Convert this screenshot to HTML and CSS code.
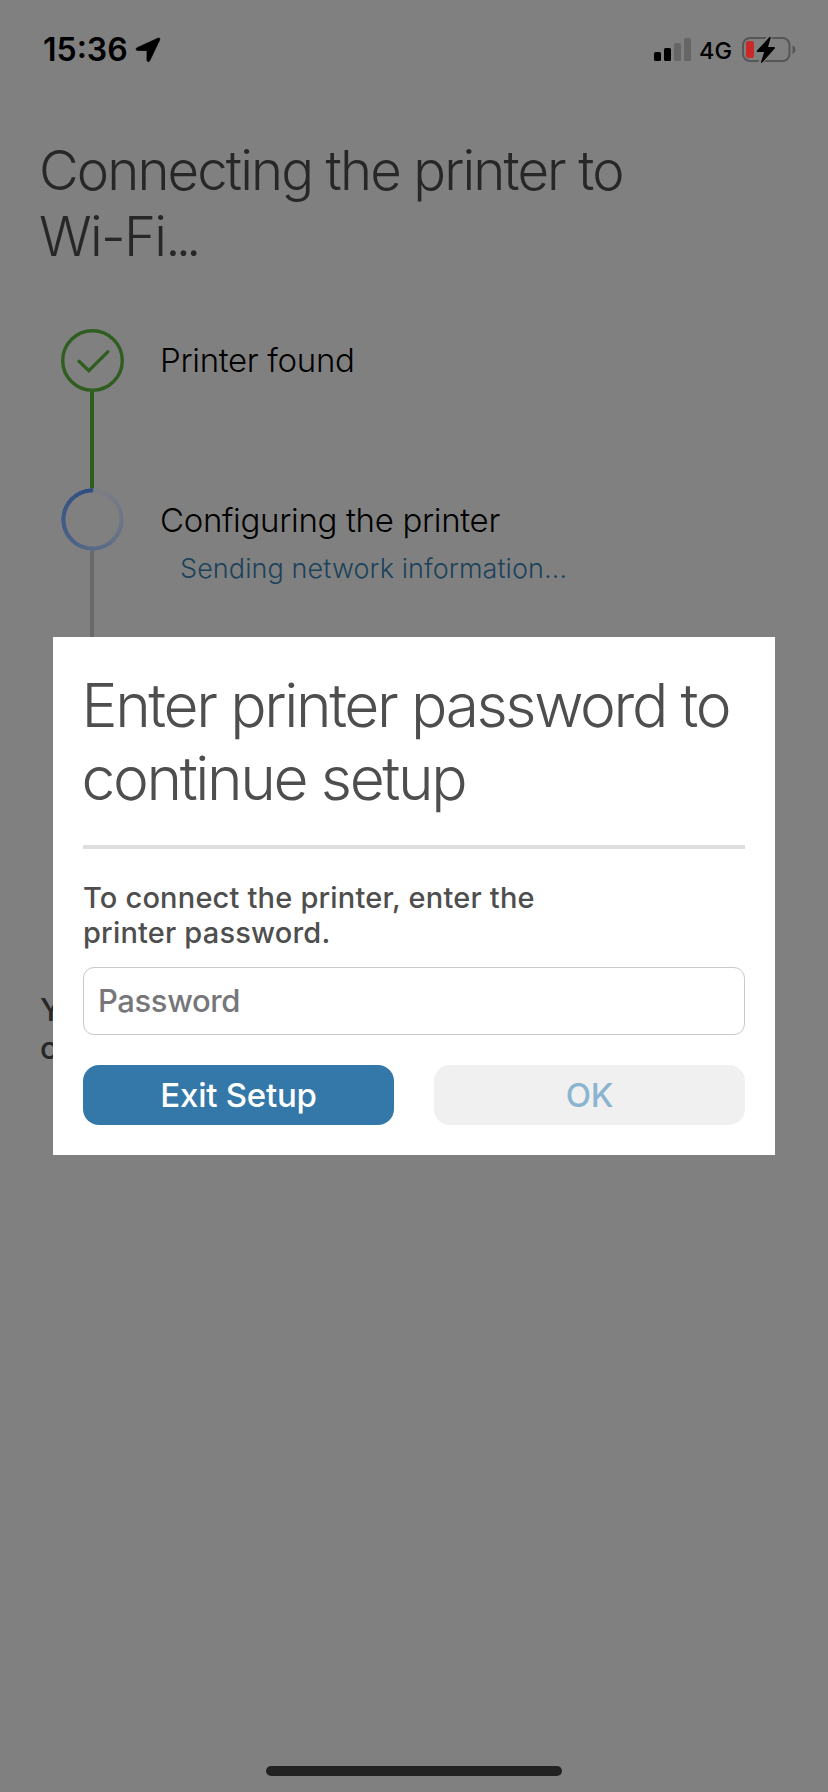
FILE: index.html
```html
<!DOCTYPE html>
<html lang="en">
<head>
<meta charset="utf-8">
<title>Printer setup</title>
<link rel="stylesheet" href="styles.css">
</head>
<body>
<div class="screen">
  <header class="status">
    <span class="time">15:36</span>
    <svg class="location" width="26" height="26" viewBox="0 0 26 26"><path d="M23 1.2 2.2 10.7C.5 11.5.8 13.4 2.7 13.4H12V23c0 2 2 2.300 2.800.5L24.600 3C25.200 1.500 24.400.6 23 1.200Z" stroke="#000" stroke-width=".8"/></svg>
    <svg class="signal" width="38" height="24" viewBox="0 0 38 24"><rect y="14" width="7" height="9" rx="1.500"/><rect x="10" y="10" width="7" height="13" rx="1.500"/><g fill="#666"><rect x="20" y="5" width="7" height="18" rx="1.500"/><rect x="30" width="7" height="23" rx="1.500"/></g></svg>
    <span class="network">4G</span>
    <svg class="battery" width="54" height="28" viewBox="0 0 54 28"><rect x="1" y="2" width="46.500" height="23" rx="7" fill="none" stroke="#565656" stroke-width="2"/><path d="M50.500 9.500c4 1.500 4 7 0 8.500Z" fill="#565656"/><rect x="4" y="5" width="8" height="17" rx="2.500" fill="#c92a27"/><path d="M28 .5 14.500 14.800c-.7.8-.3 1.700.7 1.700h5.600L18.500 26.500 33 12.500c.7-.8.3-1.700-.7-1.700h-6.600Z" stroke="#808080" stroke-width="4" stroke-linejoin="round"/><path d="M27.500 1 15 14.600c-.7.8-.3 1.500.7 1.500h6.500L19 25.800c-.3 1 .6 1.400 1.300.6L32.700 12.600c.6-.8.3-1.600-.7-1.600h-6L28.700 1.800c.3-1-.5-1.500-1.200-.8Z"/></svg>
  </header>

  <main class="page">
    <h1 class="title">Connecting the printer to<br><span class="title-end">Wi-Fi<span class="dots">...</span></span></h1>
    <ol class="steps">
      <li class="step">
        <div class="track">
          <svg width="63" height="63" viewBox="0 0 63 63" fill="none" stroke="#2f5e20" stroke-width="3.400"><circle cx="31.500" cy="31.500" r="29.800"/><path d="m18 32.200 9.800 9.500 19-18.800" stroke-linecap="round"/></svg>
          <span class="line line-done"></span>
        </div>
        <div class="label"><p class="name">Printer found</p></div>
      </li>
      <li class="step">
        <div class="track">
          <span class="spinner"></span>
          <span class="line"></span>
        </div>
        <div class="label"><p class="name config">Configuring the printer</p><p class="detail">Sending network information...</p></div>
      </li>
    </ol>
    <p class="note">Y<br>c</p>
  </main>
  <span class="home"></span>

  <section class="dialog">
    <h2 class="heading">Enter printer password to<br>continue setup</h2>
    <hr class="divider">
    <p class="message">To connect the printer, enter the<br>printer password.</p>
    <div class="field">Password</div>
    <div class="actions">
      <button class="button primary">Exit Setup</button>
      <button class="button disabled">OK</button>
    </div>
  </section>
</div>
</body>
</html>
```
FILE: styles.css
```css
* { box-sizing: border-box; margin: 0; padding: 0; }
body { font-family: Inter, "Liberation Sans", sans-serif; background: #808080; color: #000; }
.screen { position: relative; width: 828px; height: 1792px; overflow: hidden; background: #808080; display: flex; flex-direction: column; }
.status { height: 137px; padding: 31px 32px 0 43px; display: flex; align-items: flex-start; }
.status svg { flex: none; }
.time { width: 92px; font-size: 32px; line-height: 38px; font-weight: 600; white-space: nowrap; }
.location { margin-top: 6px; }
.signal { margin: 7px 0 0 auto; }
.network { width: 50px; padding-left: 7px; font-size: 23.500px; line-height: 28px; font-weight: 500; margin-top: 6px; white-space: nowrap; }
.battery { margin-top: 5px; }
.page { flex: 1; padding: 0 40px; }
.title { margin-left: -1px; font-size: 54.500px; line-height: 66px; font-weight: 300; color: #272727; white-space: nowrap; letter-spacing: -1.890px; }
.title-end { letter-spacing: -1.700px; }
.dots { letter-spacing: -5px; }
.steps { list-style: none; margin: 60px 0 0 20.500px; }
.step { display: flex; gap: 36.500px; height: 159px; }
.track { width: 63px; display: flex; flex-direction: column; align-items: center; flex: none; }
.track svg { display: block; }
.line { width: 4px; flex: 1; background: #696969; }
.line-done { background: #2f5e20; }
.spinner { width: 63px; height: 63px; border-radius: 50%; background: conic-gradient(from 3deg, #7c7e83, #6d7686 25%, #566987 50%, #3f5a86 75%, #2d4c80 99%, #7c7e83); -webkit-mask: radial-gradient(circle, transparent 26.500px, #000 27.500px, #000 31px, transparent 31.500px); mask: radial-gradient(circle, transparent 26.500px, #000 27.500px, #000 31px, transparent 31.500px); }
.label { padding-top: 11px; white-space: nowrap; }
.name { font-size: 33px; line-height: 40px; font-weight: 300; letter-spacing: -.320px; }
.config { margin-top: 1px; }
.detail { margin: 13px 0 0 20px; font-size: 27px; line-height: 32px; font-weight: 300; letter-spacing: .080px; color: #1c425b; }
.note { margin-top: 344px; font-size: 31px; line-height: 38px; font-weight: 500; color: #272727; }
.home { width: 296px; height: 10px; border-radius: 5px; background: #222; margin: 0 auto 16px; }
.dialog { position: absolute; left: 53px; top: 637px; width: 722px; height: 518px; padding: 32px 30px 30px; background: #fff; }
.heading { margin-left: -1.500px; font-size: 60.500px; line-height: 73px; font-weight: 300; letter-spacing: -2.380px; color: #4e4e4e; white-space: nowrap; }
.divider { height: 4px; border: 0; background: #dedede; margin-top: 30px; }
.message { margin-top: 31px; font-size: 29px; line-height: 35px; font-weight: 500; letter-spacing: .190px; color: #4e4e4e; white-space: nowrap; }
.field { margin-top: 17px; height: 68px; border: 1px solid #c9c9c9; border-radius: 11px; padding: 0 14px; font-size: 31px; line-height: 66px; font-weight: 500; letter-spacing: -.400px; color: #77777b; }
.actions { margin-top: 30px; display: grid; grid-template-columns: 1fr 1fr; gap: 40px; }
.button { height: 60px; border: 0; border-radius: 16px; font: 500 33px/60px Inter, sans-serif; letter-spacing: -.250px; }
.primary { background: #3478a9; color: #fff; }
.disabled { background: #f0f0f0; color: #8ab4d0; }
```
